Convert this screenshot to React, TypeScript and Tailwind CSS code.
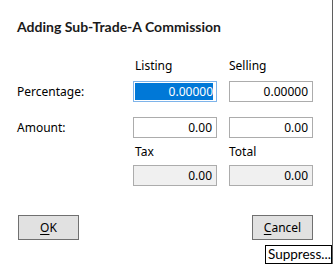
import React from "react";

function Box({ value, disabled }: { value: string; disabled?: boolean }) {
  return (
    <div
      className={
        "w-[84px] h-[21px] border flex items-center justify-end pr-[4px] " +
        (disabled ? "bg-[#f0f0f0] border-[#acacac]" : "bg-white border-[#acacac]")
      }
    >
      <span className="leading-[16px]">{value}</span>
    </div>
  );
}

export default function App() {
  return (
    <div className="w-[333px] h-[264px] bg-white border-r border-[#5f5f5f] relative overflow-hidden text-[12px] text-black font-['Noto_Sans',sans-serif]">
      <div className="pt-[17px] pl-[17px] font-bold text-[14px] leading-[19px] text-[#1a1a1a] font-['Lato',sans-serif]">
        Adding Sub-Trade-A Commission
      </div>
      <div className="pl-[17px] flex flex-col">
        <div className="mt-[22px] flex leading-[16px] h-[16px]">
          <div className="w-[118px]" />
          <div className="w-[94px]">Listing</div>
          <div>Selling</div>
        </div>
        <div className="mt-[7px] flex items-center">
          <div className="w-[116px] leading-[16px]">Percentage:</div>
          <div className="w-[84px] h-[21px] border border-[#7eb4ea] bg-white p-[1px] flex">
            <div className="flex-1 bg-[#0078d7] mr-[2px] text-white text-right leading-[17px] overflow-hidden whitespace-nowrap">
              0.00000
            </div>
          </div>
          <div className="ml-[12px]">
            <Box value="0.00000" />
          </div>
        </div>
        <div className="mt-[15px] flex items-center">
          <div className="w-[116px] leading-[16px]">Amount:</div>
          <Box value="0.00" />
          <div className="ml-[12px]">
            <Box value="0.00" />
          </div>
        </div>
        <div className="mt-[6px] flex leading-[16px] h-[16px]">
          <div className="w-[118px]" />
          <div className="w-[94px]">Tax</div>
          <div>Total</div>
        </div>
        <div className="mt-[5px] flex items-center">
          <div className="w-[116px]" />
          <Box value="0.00" disabled />
          <div className="ml-[12px]">
            <Box value="0.00" disabled />
          </div>
        </div>
      </div>
      <div className="mt-[29px] pl-[18px] pr-[19px] flex justify-between">
        <button className="w-[61px] h-[25px] bg-[#e1e1e1] border border-[#707070] flex items-center justify-center leading-[16px]">
          <span>
            <span className="underline underline-offset-[2px]">O</span>K
          </span>
        </button>
        <button className="w-[61px] h-[25px] bg-[#e1e1e1] border border-[#707070] flex items-center justify-center leading-[16px]">
          <span>
            <span className="underline underline-offset-[2px]">C</span>ancel
          </span>
        </button>
      </div>
      <div className="absolute left-[265px] top-[245px] w-[67px] h-[19px] border border-black bg-white text-[13.5px] leading-[16px] pl-[2px] whitespace-nowrap font-['Lato',sans-serif]">
        Suppress...
      </div>
    </div>
  );
}
